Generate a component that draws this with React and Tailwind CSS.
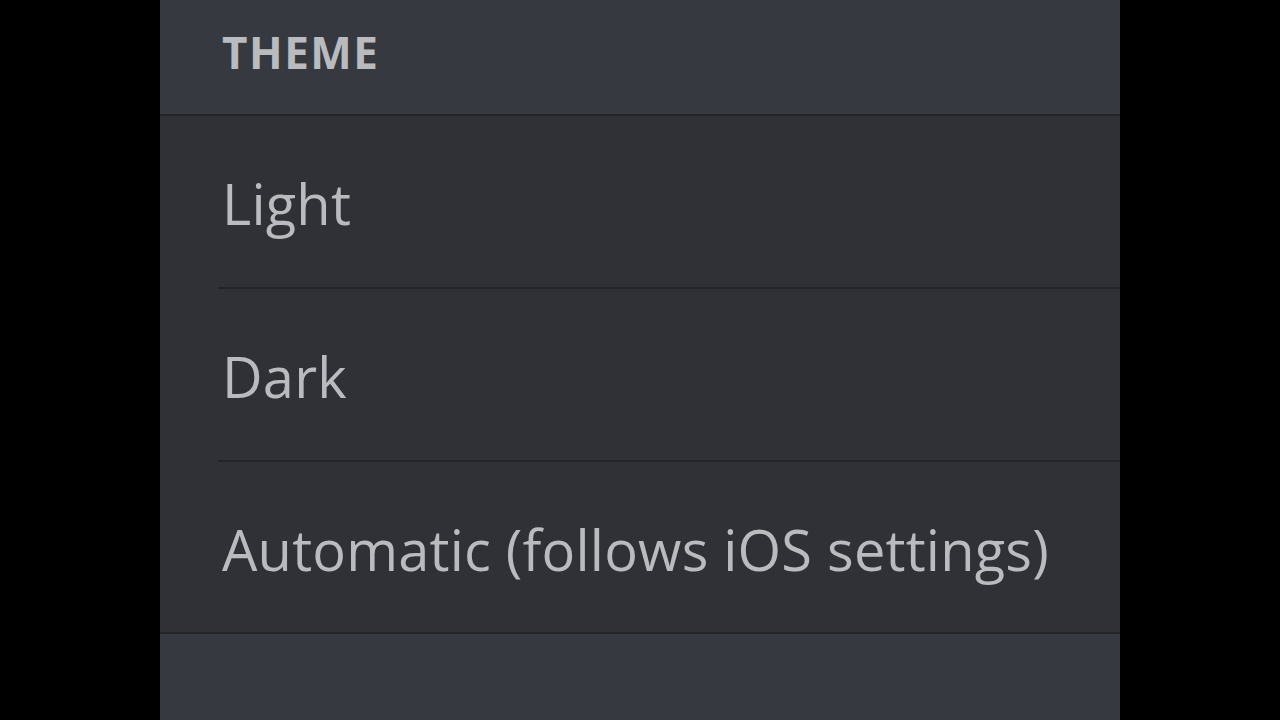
export default function App() {
  const options = ['Light', 'Dark', 'Automatic (follows iOS settings)'];

  return (
    <div className="w-[1280px] h-[720px] bg-black flex justify-center overflow-hidden">
      <div className="w-[960px] h-full bg-[#36393f] flex flex-col" style={{ fontFamily: '"Open Sans", "Liberation Sans", sans-serif' }}>
        <div className="h-[116px] shrink-0 pl-[62px] pt-[22px] border-b-2 border-[#232428]">
          <h2 className="text-[44px] font-bold text-[#b9bbbe] tracking-[1.5px] leading-[60px]">THEME</h2>
        </div>
        <div className="bg-[#2f3136] border-b-2 border-[#232428]">
          {options.map((option, i) => (
            <div key={option} className="pl-[58px]">
              <div
                className={
                  i < options.length - 1
                    ? 'h-[173px] flex items-center pt-[3px] border-b-2 border-[#232428]'
                    : 'h-[170px] flex items-center pt-[3px]'
                }
              >
                <span className="pl-[4px] text-[56px] text-[#b9bbbe] leading-none tracking-[0.2px]">{option}</span>
              </div>
            </div>
          ))}
        </div>
        <div className="flex-1 bg-[#36393f]" />
      </div>
    </div>
  );
}
